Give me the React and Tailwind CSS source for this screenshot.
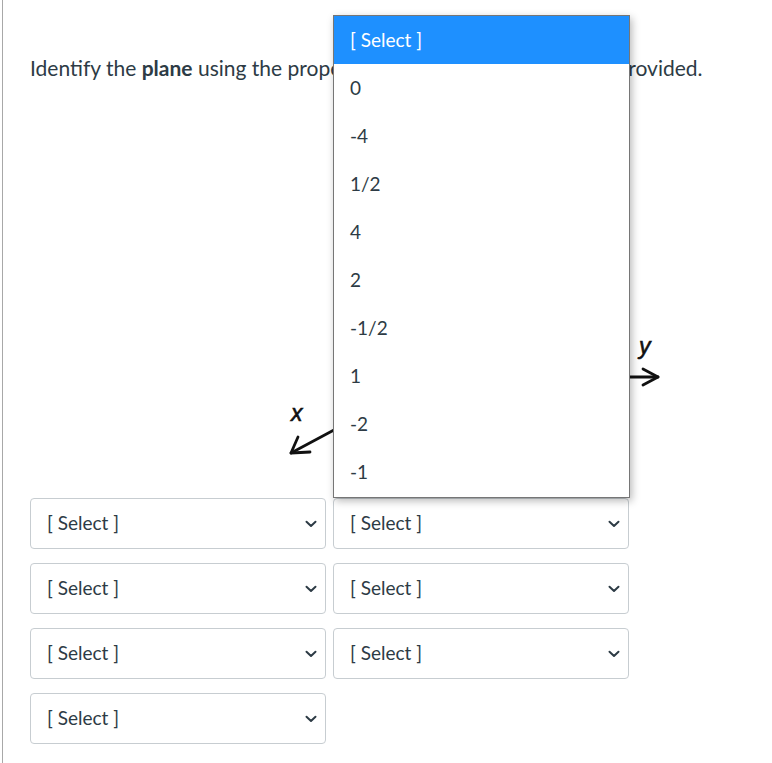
import React from 'react';

const options = ['0', '-4', '1/2', '4', '2', '-1/2', '1', '-2', '-1'];

function Chevron() {
  return (
    <svg className="w-[12px] h-[8px]" viewBox="0 0 12 8" fill="none" stroke="#2d3b45" strokeWidth="2" strokeLinecap="round" strokeLinejoin="round">
      <path d="M1.5 1.8L6 6L10.5 1.8" />
    </svg>
  );
}

function SelectBox() {
  return (
    <div className="h-[51px] w-[296px] border border-[#c7cdd1] rounded-[4px] bg-white flex items-center justify-between pl-[16px] pr-[8px] text-[19px] text-[#2d3b45]">
      <span>[ Select ]</span>
      <Chevron />
    </div>
  );
}

function Axes() {
  return (
    <svg width="700" height="416" viewBox="0 0 700 416" fill="none" stroke="#111" strokeWidth="2.8" strokeLinecap="round">
      <path d="M403 294 L261 370" />
      <path d="M261 370 L268 354 M261 370 L280 369" />
      <text x="261" y="338" fill="#111" stroke="#111" strokeWidth="0.6" fontSize="23" fontStyle="italic" fontFamily="'Liberation Sans', sans-serif">x</text>
      <path d="M373 294 L628 294" />
      <path d="M628 294 L613 286 M628 294 L613 302" />
      <text x="609" y="271" fill="#111" stroke="#111" strokeWidth="0.6" fontSize="23" fontStyle="italic" fontFamily="'Liberation Sans', sans-serif">y</text>
      <path d="M403 294 L403 120" />
    </svg>
  );
}

export default function App() {
  return (
    <div className="relative min-h-[763px] bg-white font-['Lato','Noto_Sans',sans-serif] text-[#2d3b45]">
      <div className="ml-[2px] border-l border-[#a8a8a8] min-h-[763px] pl-[27px] pt-[53px]">
        <p className="text-[21px] leading-[30px] whitespace-nowrap">
          Identify the <strong className="font-bold">plane</strong> using the proper intercepts in the two spaces provided.
        </p>
        <div className="h-[415px]">
          <Axes />
        </div>
        <div className="grid grid-cols-[296px_296px] gap-x-[7px] gap-y-[14px]">
          <SelectBox />
          <SelectBox />
          <SelectBox />
          <SelectBox />
          <SelectBox />
          <SelectBox />
          <SelectBox />
        </div>
      </div>

      <div className="absolute left-[333px] top-[15px] w-[297px] pb-[1px] border border-[#767676] bg-white shadow-[2px_3px_8px_rgba(0,0,0,0.28)]">
        <div className="h-[48px] bg-[#1e90ff] text-white text-[19px] flex items-center pl-[16px]">[ Select ]</div>
        {options.map((o) => (
          <div key={o} className="h-[48px] text-[19px] text-[#2d3b45] flex items-center pl-[16px]">
            {o}
          </div>
        ))}
      </div>
    </div>
  );
}
